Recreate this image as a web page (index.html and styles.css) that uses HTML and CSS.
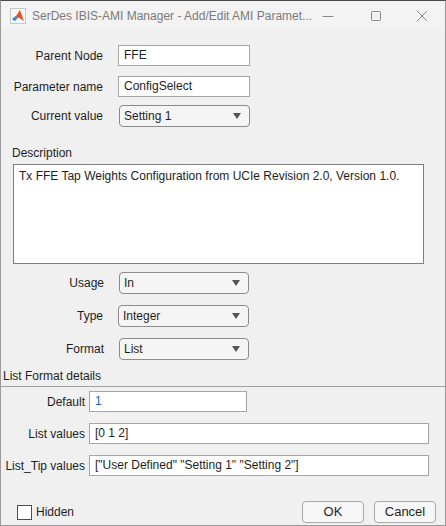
FILE: index.html
```
<!DOCTYPE html>
<html>
<head>
<meta charset="utf-8">
<link rel="stylesheet" href="styles.css">
</head>
<body>
<div class="window">
  <div class="titlebar">
    <svg class="app-icon" width="16" height="16" viewBox="0 0 16 16">
      <rect x="0.5" y="0.5" width="15" height="15" fill="#f7f7f7" stroke="#c8c8c8"/>
      <polygon points="2,11 6,8 8,9.5 5,13" fill="#2b6fc0"/>
      <polygon points="6,8 10,2 14,13 11,11 8,9.5" fill="#e8541e"/>
      <polygon points="10,2 12,7 14,13" fill="#f5a623"/>
      <polygon points="6,8 8,9.5 5,13 4,12" fill="#3d9ad9"/>
    </svg>
    <span class="title">SerDes IBIS-AMI Manager - Add/Edit AMI Paramet...</span>
    <span class="winbtn min"><svg width="12" height="12" viewBox="0 0 12 12"><line x1="0.5" y1="6.5" x2="11.5" y2="6.5" stroke="#8a8a8a" stroke-width="1"/></svg></span>
    <span class="winbtn max"><svg width="12" height="12" viewBox="0 0 12 12"><rect x="1.5" y="1.5" width="9" height="9" rx="1" fill="none" stroke="#8a8a8a" stroke-width="1"/></svg></span>
    <span class="winbtn close"><svg width="12" height="12" viewBox="0 0 12 12"><path d="M1 1 L11 11 M11 1 L1 11" stroke="#8a8a8a" stroke-width="1"/></svg></span>
  </div>
  <div class="content">
    <div class="row r-parent">
      <label class="lbl top">Parent Node</label>
      <div class="field top-field">FFE</div>
    </div>
    <div class="row r-pname">
      <label class="lbl top">Parameter name</label>
      <div class="field top-field">ConfigSelect</div>
    </div>
    <div class="row r-cur">
      <label class="lbl top">Current value</label>
      <div class="dropdown top-dd"><span>Setting 1</span><i class="arrow"></i></div>
    </div>
    <div class="desc-label">Description</div>
    <div class="textarea">Tx FFE Tap Weights Configuration from UCIe Revision 2.0, Version 1.0.</div>
    <div class="row dd-row r-usage">
      <label class="lbl mid">Usage</label>
      <div class="dropdown mid-dd"><span>In</span><i class="arrow"></i></div>
    </div>
    <div class="row dd-row r-type">
      <label class="lbl mid">Type</label>
      <div class="dropdown mid-dd"><span>Integer</span><i class="arrow"></i></div>
    </div>
    <div class="row dd-row r-format">
      <label class="lbl mid">Format</label>
      <div class="dropdown mid-dd"><span>List</span><i class="arrow"></i></div>
    </div>
    <div class="section-title">List Format details</div>
    <div class="divider"></div>
    <div class="row r-default">
      <label class="lbl bot">Default</label>
      <div class="field short blue">1</div>
    </div>
    <div class="row r-list">
      <label class="lbl bot">List values</label>
      <div class="field wide">[0 1 2]</div>
    </div>
    <div class="row r-tip">
      <label class="lbl bot">List_Tip values</label>
      <div class="field wide">["User Defined" "Setting 1" "Setting 2"]</div>
    </div>
    <div class="footer">
      <div class="check"><span class="box"></span><span>Hidden</span></div>
      <div class="buttons">
        <div class="btn">OK</div>
        <div class="btn">Cancel</div>
      </div>
    </div>
  </div>
</div>
</body>
</html>
```

FILE: styles.css
```
html, body {
  margin: 0;
  padding: 0;
  background: #f0f0f0;
  overflow: hidden;
}
.window {
  width: 446px;
  height: 526px;
  box-sizing: border-box;
  border-top: 1px solid #4a4a4a;
  border-left: 1px solid #9a9a9a;
  border-right: 1px solid #9a9a9a;
  border-bottom: 1px solid #9a9a9a;
  background: #f0f0f0;
  font-family: "Liberation Sans", Arial, sans-serif;
  font-size: 12px;
  color: #1e1e1e;
}
.titlebar {
  height: 29px;
  display: flex;
  align-items: center;
  background: #f3f3f3;
  position: relative;
}
.app-icon {
  margin-left: 9px;
  margin-top: 1px;
}
.title {
  margin-left: 6px;
  font-family: "Liberation Sans", Arial, sans-serif;
  font-size: 12px;
  color: #7a7a7a;
}
.winbtn {
  position: absolute;
  top: 9px;
  width: 12px;
  height: 12px;
  display: block;
}
.winbtn svg { display: block; }
.winbtn.min { left: 321px; }
.winbtn.max { left: 369px; }
.winbtn.close { left: 415px; }

.content {
  display: flex;
  flex-direction: column;
}
.row {
  display: flex;
  align-items: center;
  height: 21px;
}
.dd-row { height: 22px; }
.lbl {
  text-align: right;
  white-space: nowrap;
  color: #1e1e1e;
}
.lbl.top { width: 102px; margin-right: 15px; }
.lbl.mid { width: 103px; margin-right: 15px; }
.lbl.bot { width: 84px; margin-right: 4px; }

.field {
  height: 21px;
  box-sizing: border-box;
  border: 1px solid #a6a6a6;
  background: #ffffff;
  padding-left: 5px;
  line-height: 19px;
  white-space: nowrap;
}
.top-field { width: 132px; }
.short { width: 158px; }
.wide { width: 340px; }
.blue { color: #1560bd; }

.dropdown {
  height: 22px;
  box-sizing: border-box;
  border: 1px solid #8c8c8c;
  border-radius: 4px;
  background: #f5f5f5;
  display: flex;
  align-items: center;
  justify-content: space-between;
  padding-left: 4px;
  padding-right: 8px;
}
.top-dd { width: 131px; margin-left: 1px; }
.mid-dd { width: 130px; }
.arrow {
  width: 0;
  height: 0;
  border-left: 4.5px solid transparent;
  border-right: 4.5px solid transparent;
  border-top: 6px solid #555555;
}

.r-parent { margin-top: 15px; }
.r-pname { margin-top: 10px; }
.r-cur { margin-top: 8px; }
.desc-label {
  margin-top: 20px;
  margin-left: 11px;
  height: 14px;
  line-height: 14px;
}
.textarea {
  margin-top: 4px;
  margin-left: 12px;
  width: 411px;
  height: 100px;
  box-sizing: border-box;
  border: 1px solid #7f7f7f;
  background: #ffffff;
  padding: 4px 5px;
  line-height: 14px;
}
.r-usage { margin-top: 8px; }
.r-type { margin-top: 11px; }
.r-format { margin-top: 11px; }
.r-type .lbl.mid { width: 102px; margin-right: 15px; }
.r-type .mid-dd { width: 131px; }
.section-title {
  margin-top: 9px;
  margin-left: 2px;
  height: 14px;
  line-height: 14px;
}
.divider {
  margin-top: 3px;
  height: 1px;
  background: #a0a0a0;
}
.r-default { margin-top: 4px; }
.r-list { margin-top: 11px; }
.r-tip { margin-top: 11px; }

.footer {
  margin-top: 25px;
  display: flex;
  align-items: center;
  justify-content: space-between;
  height: 22px;
}
.check {
  display: flex;
  align-items: center;
  margin-left: 16px;
}
.box {
  width: 13px;
  height: 13px;
  border: 1px solid #4d4d4d;
  background: #ffffff;
  margin-right: 4px;
}
.buttons {
  display: flex;
  margin-right: 9px;
}
.btn {
  width: 62px;
  height: 22px;
  box-sizing: border-box;
  border: 1px solid #a8a8a8;
  border-radius: 4px;
  background: #f7f7f7;
  text-align: center;
  line-height: 20px;
  font-size: 13px;
  margin-left: 10px;
}
```
